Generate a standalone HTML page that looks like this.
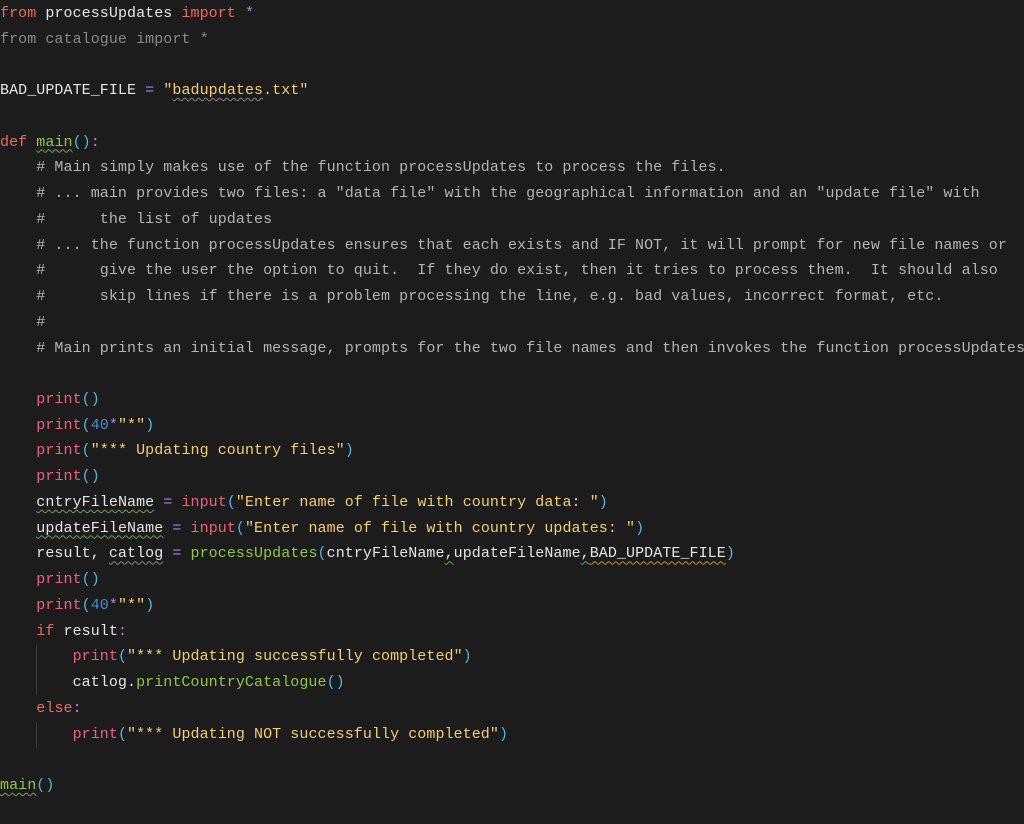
<!DOCTYPE html>
<html><head><meta charset="utf-8"><style>
html,body{margin:0;padding:0;background:#1c1c1c;width:1024px;height:824px;overflow:hidden}
pre{margin:0;padding-top:1px;font-family:"Liberation Mono",monospace;font-size:15px;letter-spacing:0.07px;line-height:25.73px;color:#e6e6e6;white-space:pre;position:relative}
.k{color:#ee6b5a}.p{color:#f0607e}.b{color:#4cb8e0}.n{color:#3f8fd8}.s{color:#f5cf68}.g{color:#8fca3a}.o{color:#a884ee}.c{color:#b4b4b4}.d{color:#8a8a8a}
.w{text-decoration:underline wavy #7a9a5a;text-decoration-thickness:1px;text-underline-offset:3px}
.wy{text-decoration:underline wavy #c8960a;text-decoration-thickness:1px;text-underline-offset:3px}
.wg{text-decoration:underline wavy #888;text-decoration-thickness:1px;text-underline-offset:3px}
.guide{position:absolute;left:36px;width:1px;background:#3a3a3a}
</style></head><body><pre><span class="k">from</span> processUpdates <span class="k">import</span> <span class="o">*</span>
<span class="d">from catalogue import *</span>

BAD_UPDATE_FILE <span class="o">=</span> <span class="s">"<span class="wg">badupdates</span>.txt"</span>

<span class="k">def</span> <span class="g w">main</span><span class="b">()</span><span class="o">:</span>
<span class="c">    # Main simply makes use of the function processUpdates to process the files.</span>
<span class="c">    # ... main provides two files: a "data file" with the geographical information and an "update file" with</span>
<span class="c">    #      the list of updates</span>
<span class="c">    # ... the function processUpdates ensures that each exists and IF NOT, it will prompt for new file names or</span>
<span class="c">    #      give the user the option to quit.  If they do exist, then it tries to process them.  It should also</span>
<span class="c">    #      skip lines if there is a problem processing the line, e.g. bad values, incorrect format, etc.</span>
<span class="c">    #</span>
<span class="c">    # Main prints an initial message, prompts for the two file names and then invokes the function processUpdates</span>

    <span class="p">print</span><span class="b">()</span>
    <span class="p">print</span><span class="b">(</span><span class="n">40</span><span class="o">*</span><span class="s">"*"</span><span class="b">)</span>
    <span class="p">print</span><span class="b">(</span><span class="s">"*** Updating country files"</span><span class="b">)</span>
    <span class="p">print</span><span class="b">()</span>
    <span class="w">cntryFileName</span> <span class="o">=</span> <span class="p">input</span><span class="b">(</span><span class="s">"Enter name of file with country data: "</span><span class="b">)</span>
    <span class="w">updateFileName</span> <span class="o">=</span> <span class="p">input</span><span class="b">(</span><span class="s">"Enter name of file with country updates: "</span><span class="b">)</span>
    result, <span class="wg">catlog</span> <span class="o">=</span> <span class="g">processUpdates</span><span class="b">(</span>cntryFileName<span class="w">,</span>updateFileName<span class="w">,</span><span class="wy">BAD_UPDATE_FILE</span><span class="b">)</span>
    <span class="p">print</span><span class="b">()</span>
    <span class="p">print</span><span class="b">(</span><span class="n">40</span><span class="o">*</span><span class="s">"*"</span><span class="b">)</span>
    <span class="k">if</span> result<span class="o">:</span>
        <span class="p">print</span><span class="b">(</span><span class="s">"*** Updating successfully completed"</span><span class="b">)</span>
        catlog.<span class="g">printCountryCatalogue</span><span class="b">()</span>
    <span class="k">else</span><span class="o">:</span>
        <span class="p">print</span><span class="b">(</span><span class="s">"*** Updating NOT successfully completed"</span><span class="b">)</span>

<span class="g w">main</span><span class="b">()</span>
<div class="guide" style="top:645px;height:50px"></div><div class="guide" style="top:722px;height:26px"></div></pre></body></html>
